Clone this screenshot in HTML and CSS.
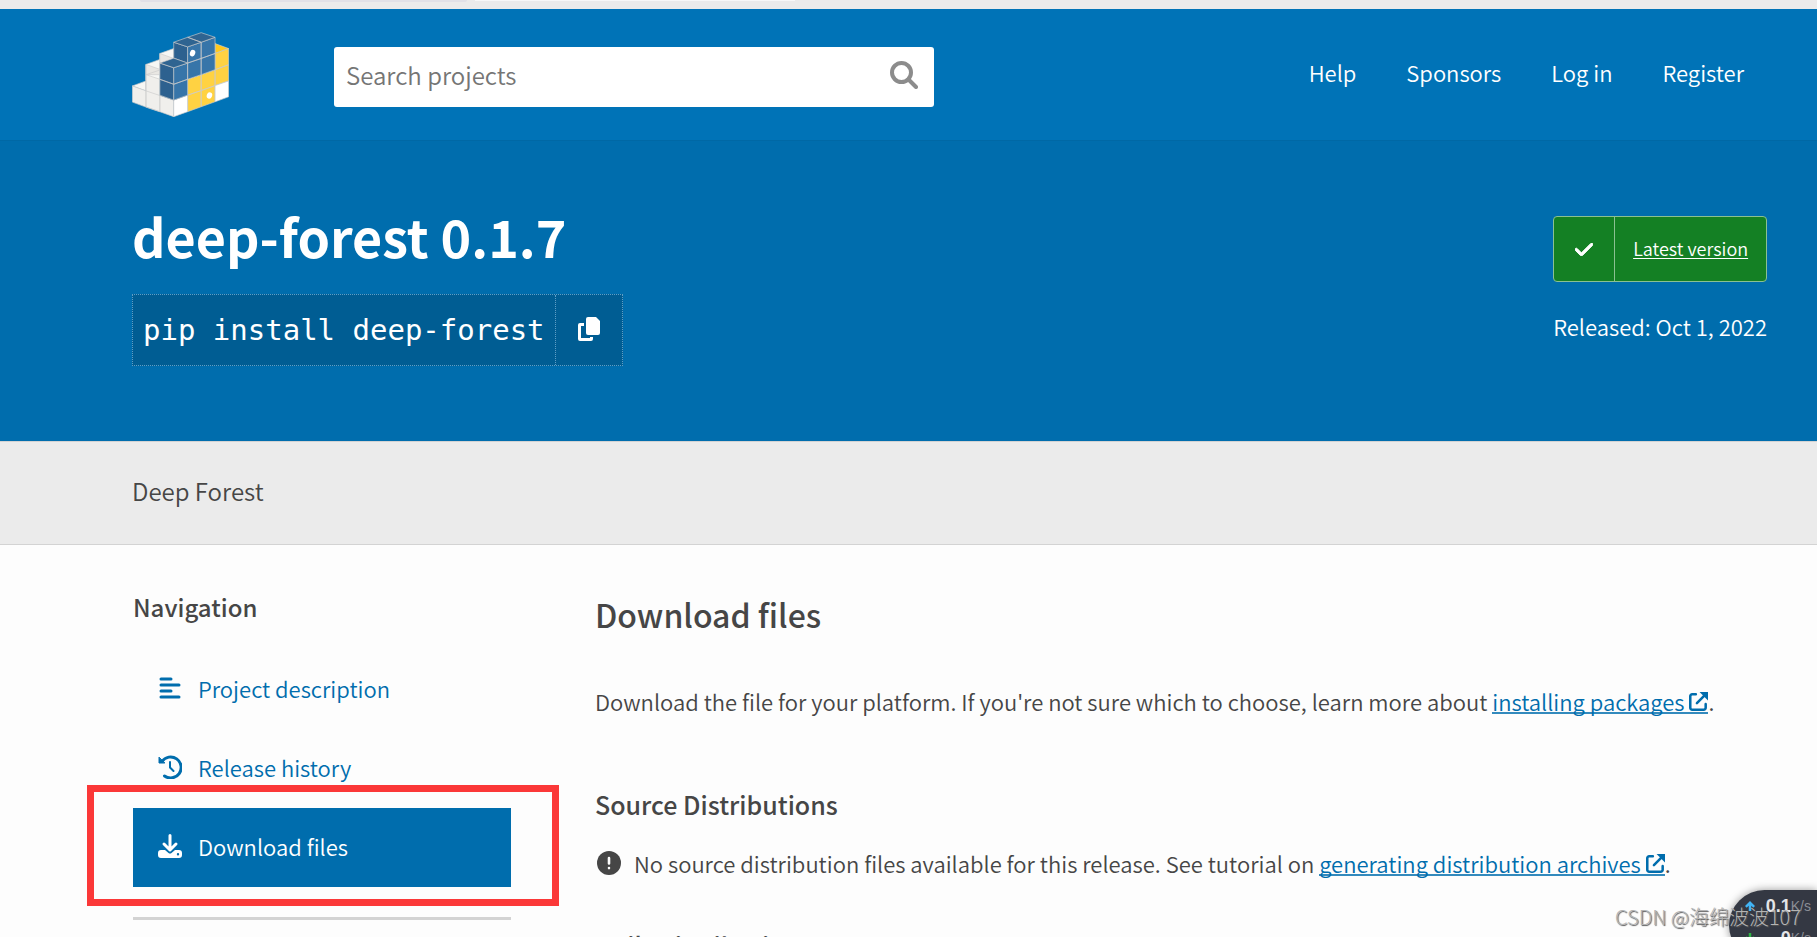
FILE: index.html
```html
<!DOCTYPE html>
<html lang="en">
<head>
<meta charset="utf-8">
<title>deep-forest · PyPI</title>
<link rel="stylesheet" href="styles.css">
</head>
<body>
<div class="browser-edge"><span class="address-bar"></span><span class="toolbar-field"></span></div>

<header class="site-header">
  <a class="logo" href="#" aria-label="PyPI">
    <svg viewBox="65 35 293 257" width="97" height="85" stroke="#ccc" stroke-width="2" stroke-linejoin="round" aria-hidden="true">
      <path fill="#f7f7f4" d="M149 100 191 85V150H149ZM107 133 149 118V180H107ZM66 198 107 183V213Z"/>
      <path fill="#e9e7e3" d="M149 100 191 115V130H149ZM107 133 149 148V164H107Z"/>
      <path fill="#f0efec" d="M107 164 149 178V276L107 262ZM66 198 107 213V262L66 247ZM107 213 149 227 191 241V291L149 276V227M149 276 107 262"/>
      <path fill="none" d="M107 164 149 150M107 133V213"/>
      <path fill="#ffc91d" d="M316 70 357 85 316 100Z"/>
      <path fill="#ffd242" d="M316 100 357 85V134L316 149ZM233 178 274 164V212L233 226ZM274 164 316 149V197L274 212ZM316 149 357 134V183L316 197ZM233 226 274 212V261L233 276ZM274 212 316 197V246L274 261Z"/>
      <path fill="#fff" d="M191 241 233 226V276L191 291ZM316 197 357 183V231L316 246Z"/>
      <path fill="#2d618f" d="M149 129 191 143V193L149 178ZM149 178 191 193V241L149 226ZM191 66 233 80V129L191 114Z"/>
      <path fill="#3775a9" d="M191 143 233 129V178L191 193ZM191 193 233 178V226L191 241ZM233 129 274 115V164L233 178ZM274 115 316 100V149L274 164ZM233 80 274 66V115L233 129ZM274 66 316 51V100L274 115Z"/>
      <path fill="#2f6491" d="M149 129 191 114 233 129 191 143ZM191 66 233 51 274 66 233 80ZM233 51 274 37 316 51 274 66Z"/>
      <g fill="#fff" stroke="none"><ellipse cx="248" cy="99" rx="8" ry="10" transform="rotate(20 248 99)"/><ellipse cx="299" cy="227" rx="8" ry="10" transform="rotate(20 299 227)"/></g>
    </svg>
  </a>
  <form class="search" role="search">
    <input class="search-input" type="search" aria-label="Search projects" placeholder="Search projects">
    <button class="search-button" type="button" aria-label="Search">
      <svg viewBox="0 0 28 28" width="28" height="28" fill="none" stroke="#8c8c8c" stroke-width="4" stroke-linecap="round" aria-hidden="true"><circle cx="11.500" cy="11.500" r="9.500"/><path d="M18.500 18.500 26 26"/></svg>
    </button>
  </form>
  <nav class="site-nav" aria-label="Main">
    <a href="#">Help</a>
    <a href="#">Sponsors</a>
    <a href="#">Log in</a>
    <a href="#">Register</a>
  </nav>
</header>

<section class="banner">
  <div>
    <h1 class="package-name">deep-forest 0.1.7</h1>
    <div class="pip">
      <code class="pip-command">pip install deep-forest</code>
      <button class="pip-copy" type="button" aria-label="Copy PIP instructions">
        <svg viewBox="0 0 22 24" width="22" height="24" aria-hidden="true"><path fill="#fff" d="M10 0h8l4 4v12a2 2 0 0 1-2 2H10a2 2 0 0 1-2-2V2a2 2 0 0 1 2-2Z"/><path fill="#fff" d="M2 6h4v3H3v12h9v-1h3v2a2 2 0 0 1-2 2H2a2 2 0 0 1-2-2V8a2 2 0 0 1 2-2Z"/></svg>
      </button>
    </div>
  </div>
  <div class="release">
    <div class="badge">
      <span class="badge-icon"><svg viewBox="0 96 448 320" width="18" height="13" aria-hidden="true"><path fill="#fff" stroke="#fff" stroke-width="24" d="M438.600 105.400c12.500 12.500 12.500 32.800 0 45.300l-256 256c-12.500 12.500-32.800 12.500-45.300 0l-128-128c-12.500-12.500-12.500-32.800 0-45.300s32.800-12.500 45.300 0L160 338.700 393.400 105.400c12.500-12.500 32.800-12.500 45.300 0z"/></svg></span>
      <a class="badge-link" href="#">Latest version</a>
    </div>
    <p class="release-date">Released: Oct 1, 2022</p>
  </div>
</section>

<p class="summary">Deep Forest</p>

<div class="content">
  <aside class="sidebar">
    <h2 class="sidebar-title">Navigation</h2>
    <nav class="tabs" aria-label="Project">
      <a class="tab" href="#">
        <svg viewBox="0 0 24 24" width="24" height="24" fill="none" stroke="currentColor" stroke-width="3" stroke-linecap="round" aria-hidden="true"><path d="M3 3h10M3 9h18M3 15h10M3 21h18"/></svg>
        Project description</a>
      <a class="tab" href="#">
        <svg viewBox="0 0 24 24" width="24" height="24" fill="none" stroke="currentColor" stroke-width="3" stroke-linecap="round" stroke-linejoin="round" aria-hidden="true"><path d="M4 6.500A10.500 10.500 0 1 1 6.500 21"/><path d="M1 2.500V8h5.500Z" fill="currentColor" stroke-width="1"/><path stroke-width="2" d="M12 7v5.500l3.500 3.500"/></svg>
        Release history</a>
      <a class="tab tab-active" href="#">
        <svg viewBox="0 0 24 24" width="24" height="24" aria-hidden="true"><path fill="none" stroke="currentColor" stroke-width="3" stroke-linecap="round" stroke-linejoin="round" d="M12 1.500v13M6 10l6 6 6-6"/><path fill="currentColor" fill-rule="evenodd" d="M3 16h4l3.500 3a2.500 2.500 0 0 0 3 0L17 16h4a3 3 0 0 1 3 3v2a3 3 0 0 1-3 3H3a3 3 0 0 1-3-3v-2a3 3 0 0 1 3-3Zm17 3a1.200 1.200 0 1 0 0 2.400 1.200 1.200 0 0 0 0-2.400Z"/></svg>
        Download files<span class="highlight"></span></a>
    </nav>
    <hr class="divider">
  </aside>

  <main class="main">
    <h2 class="page-title">Download files</h2>
    <p class="text">Download the file for your platform. If you're not sure which to choose, learn more about <a class="link" href="#">installing packages <svg class="external" viewBox="0 0 18 18" width="19" height="19" aria-hidden="true"><path fill="none" stroke="currentColor" stroke-width="2.400" stroke-linecap="round" stroke-linejoin="round" d="M6.500 2.200H3a1.800 1.800 0 0 0-1.800 1.800v11A1.800 1.800 0 0 0 3 16.800h11a1.800 1.800 0 0 0 1.800-1.800v-3.500M7.500 10.500 15 3"/><path fill="currentColor" d="M10 0h8v8Z"/></svg></a>.</p>
    <h3 class="section-title">Source Distributions</h3>
    <p class="text notice"><svg class="notice-icon" viewBox="0 0 24 24" width="24" height="24" aria-hidden="true"><circle cx="12" cy="12" r="12" fill="#464646"/><path fill="none" stroke="#fdfdfd" stroke-width="2.600" stroke-linecap="round" d="M12 7v5.500M12 17v.1"/></svg><span>No source distribution files available for this release. See tutorial on <a class="link" href="#">generating distribution archives <svg class="external" viewBox="0 0 18 18" width="19" height="19" aria-hidden="true"><path fill="none" stroke="currentColor" stroke-width="2.400" stroke-linecap="round" stroke-linejoin="round" d="M6.500 2.200H3a1.800 1.800 0 0 0-1.800 1.800v11A1.800 1.800 0 0 0 3 16.800h11a1.800 1.800 0 0 0 1.800-1.800v-3.500M7.500 10.500 15 3"/><path fill="currentColor" d="M10 0h8v8Z"/></svg></a>.</span></p>
    <h3 class="section-title section-next">Built Distribution</h3>
  </main>
</div>

<div class="net-widget">
  <div class="net-row"><svg viewBox="0 0 12 12" width="10" height="12" fill="none" stroke="#42b4f5" stroke-width="3" aria-hidden="true"><path d="M6 12V2M1 7l5-5 5 5"/></svg><b>0.1</b><span>K/s</span></div>
  <div class="net-row"><svg viewBox="0 0 12 12" width="10" height="12" fill="none" stroke="#2fb344" stroke-width="3" aria-hidden="true"><path d="M6 0v10M1 5l5 5 5-5"/></svg><b>0</b><span>K/s</span></div>
</div>
<div class="watermark">CSDN @海绵波波107</div>
</body>
</html>
```
FILE: styles.css
```css
* { box-sizing: border-box; }

body {
  margin: 0;
  height: 100vh;
  overflow: hidden;
  background: #fdfdfd;
  color: #464646;
  font-family: "Noto Sans CJK SC", "Noto Sans", sans-serif;
  font-size: 22px;
  font-weight: 350;
  line-height: 32px;
}

h1, h2, h3, p { margin: 0; }
a { color: inherit; text-decoration: none; }
svg { flex: none; }

.browser-edge {
  display: flex;
  gap: 8px;
  height: 9px;
  padding-left: 140px;
  background: #ebebeb;
}
.address-bar { width: 327px; height: 2px; background: #e1e1e7; border-radius: 0 0 6px 6px; }
.toolbar-field { width: 320px; height: 1px; background: #f8f8f8; }

.site-header {
  display: flex;
  align-items: center;
  height: 132px;
  padding: 0 73px 0 132px;
  background: #0073b7;
  border-bottom: 1px solid #0068a5;
  color: #fff;
}
.logo { display: flex; margin: 0 105px 0 0; }
.search { display: flex; width: 600px; height: 60px; margin-top: 4px; background: #fff; border-radius: 3px; }
.search-input {
  flex: 1;
  min-width: 0;
  padding: 0 12px 4px;
  border: 0;
  background: none;
  font: inherit;
  font-size: 24px;
  color: #464646;
  outline: 0;
}
.search-input::placeholder { color: #757575; opacity: 1; }
.search-button { display: flex; align-items: center; padding: 0 16px 4px; border: 0; background: none; }
.site-nav { display: flex; gap: 50px; margin: 0 0 6px auto; }

.banner {
  display: flex;
  justify-content: space-between;
  height: 300px;
  padding: 75px 50px 0 132px;
  background: #006dad;
  color: #fff;
}
.package-name { margin-top: -6px; font-size: 52px; line-height: 52px; font-weight: 600; }
.pip {
  display: flex;
  width: fit-content;
  height: 72px;
  margin-top: 32px;
  background: #005d93;
  border: 1px dotted #5f9ec5;
}
.pip-command {
  display: flex;
  align-items: center;
  padding: 0 10px;
  font-family: "DejaVu Sans Mono", monospace;
  font-size: 29px;
}
.pip-copy {
  display: flex;
  align-items: center;
  justify-content: center;
  width: 67px;
  padding: 0 0 2px;
  border: 0;
  border-left: 1px dotted #5f9ec5;
  background: none;
}
.badge {
  display: flex;
  height: 66px;
  background: #148024;
  border: 1px solid #8ac092;
  border-radius: 4px;
  font-size: 18px;
}
.badge-icon { display: flex; align-items: center; justify-content: center; width: 61px; border-right: 1px solid #8ac092; }
.badge-link {
  display: flex;
  flex: 1;
  align-items: center;
  justify-content: center;
  padding-bottom: 2px;
  text-decoration: underline;
  text-underline-offset: 2px;
  text-decoration-skip-ink: none;
}
.release-date { margin-top: 28px; }

.summary {
  padding: 33px 132px 37px;
  background: #ebebeb;
  border-top: 1px solid #d3d3d3;
  border-bottom: 1px solid #d3d3d3;
  font-size: 24px;
}

.content {
  display: grid;
  grid-template-columns: 378px 1fr;
  column-gap: 84px;
  padding: 46px 50px 0 133px;
}
.sidebar-title { font-size: 24px; font-weight: 500; }
.tabs { margin-top: 27px; }
.tab {
  display: flex;
  align-items: center;
  gap: 16px;
  height: 79px;
  padding: 0 25px 4px;
  color: #006dad;
}
.tab-active { position: relative; background: #006dad; color: #fff; }
.highlight {
  position: absolute;
  inset: -23px -48px -19px -46px;
  border: 7px solid #fb3838;
}
.divider { height: 3px; margin: 30px 0 0; border: 0; background: #d3d3d3; }

.page-title { font-size: 32px; line-height: 46px; font-weight: 500; }
.text { margin-top: 48px; }
.link { display: inline-block; line-height: 22px; color: #006dad; border-bottom: 2px solid #338abd; }
.external { vertical-align: 0; }
.section-title { margin-top: 71px; font-size: 25px; font-weight: 500; }
.notice { display: flex; align-items: center; gap: 13px; margin-top: 27px; padding-left: 2px; }
.section-next { margin-top: 50px; }

.net-widget {
  position: absolute;
  right: 0;
  bottom: -24px;
  width: 88px;
  height: 71px;
  padding: 0 6px 0 16px;
  background: #343843;
  border-radius: 36px 0 0 36px;
  box-shadow: 0 0 8px #0006;
  color: #e4e5e8;
  font-family: "Liberation Sans", sans-serif;
  font-size: 18px;
  line-height: 24px;
}
.net-row { display: flex; align-items: center; height: 32px; }
.net-row b { margin-left: auto; font-weight: 700; }
.net-row span { color: #8b8e96; font-size: 14px; }
.watermark {
  position: absolute;
  right: 16px;
  bottom: 4px;
  color: #b4b4b4;
  font-size: 20px;
  font-weight: 300;
  text-shadow: 1px 1px 1px #555;
}
```
